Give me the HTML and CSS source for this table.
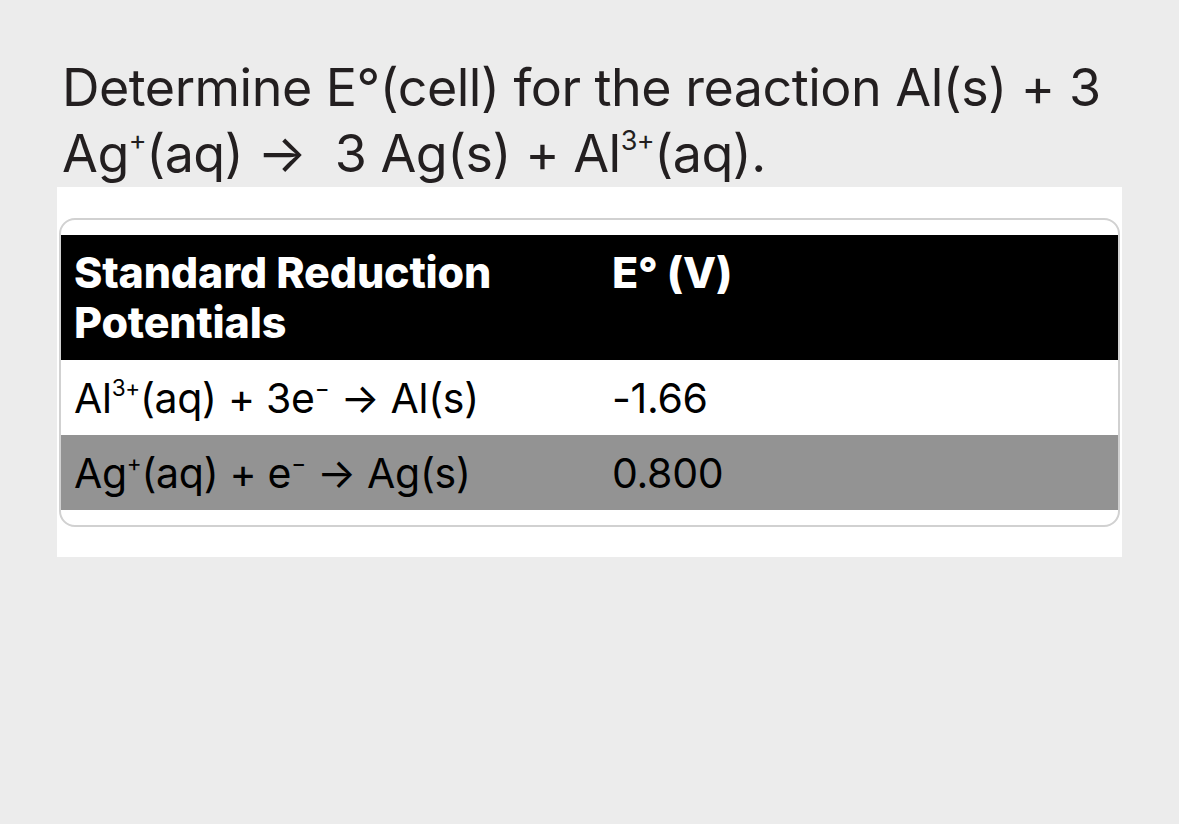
FILE: index.html
```html
<!DOCTYPE html>
<html lang="en">
<head>
<meta charset="utf-8">
<title>Standard Reduction Potentials</title>
<link rel="stylesheet" href="styles.css">
</head>
<body>
<main class="page">
  <p class="question">Determine E°(cell) for the reaction Al(s) + 3 Ag<sup>+</sup>(aq) &rarr;&nbsp; 3 Ag(s) + Al<sup>3+</sup>(aq).</p>
  <section class="panel">
    <div class="table-wrap">
      <table class="potentials">
        <thead>
          <tr>
            <th class="col-half">Standard Reduction Potentials</th>
            <th>E° (V)</th>
          </tr>
        </thead>
        <tbody>
          <tr class="row-light">
            <td>Al<sup>3+</sup>(aq) + 3e<sup>&minus;</sup> &rarr; Al(s)</td>
            <td>-1.66</td>
          </tr>
          <tr class="row-dark">
            <td>Ag<sup>+</sup>(aq) + e<sup>&minus;</sup> &rarr; Ag(s)</td>
            <td>0.800</td>
          </tr>
        </tbody>
      </table>
    </div>
  </section>
</main>
</body>
</html>
```

FILE: styles.css
```css
html, body {
  margin: 0;
  padding: 0;
  background: #ececec;
}

.page {
  padding: 55px 57px 0 57px;
  font-family: Inter, "Noto Sans", "Liberation Sans", sans-serif;
}

.question {
  margin: 0;
  padding: 0 0 0 5px;
  font-size: 52px;
  line-height: 66px;
  letter-spacing: -0.5px;
  color: #231f20;
  font-weight: 400;
}

.question sup {
  font-size: 0.52em;
  line-height: 0;
  vertical-align: 0.8em;
}

.panel {
  background: #ffffff;
  padding: 31px 2px 30px 2px;
}

.table-wrap {
  border: 2px solid #d1d1d1;
  border-radius: 16px;
  padding: 15px 0;
}

.potentials {
  width: 100%;
  border-collapse: collapse;
  border-spacing: 0;
  color: #000;
}

.potentials th {
  background: #000;
  color: #fff;
  text-align: left;
  vertical-align: top;
  font-size: 43px;
  font-weight: 800;
  line-height: 50px;
  letter-spacing: -0.2px;
  padding: 12px 13px 13px 13px;
}

.potentials .col-half {
  width: 512px;
}

.potentials td {
  height: 75px;
  padding: 0 13px;
  font-size: 41px;
  line-height: 46px;
  letter-spacing: -0.3px;
  vertical-align: middle;
  box-sizing: border-box;
}

.potentials td sup {
  font-size: 0.55em;
  line-height: 0;
  vertical-align: 0.75em;
}

.row-light td {
  background: #ffffff;
}

.row-dark td {
  background: #939393;
}
```
